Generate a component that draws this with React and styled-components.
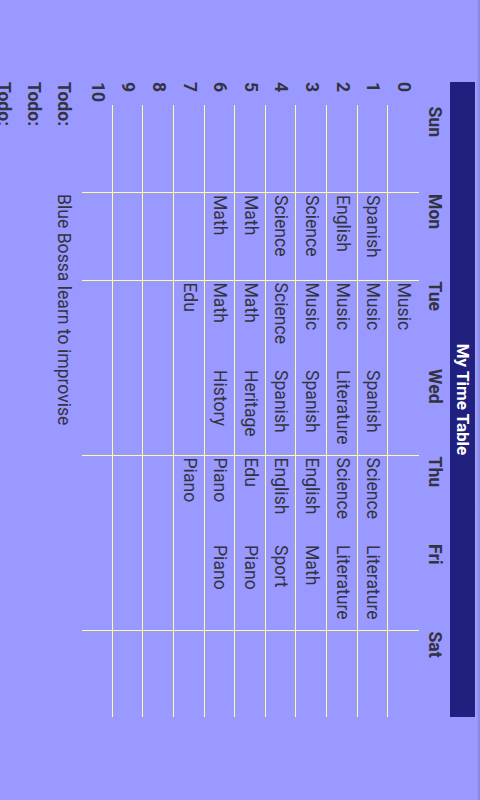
import React from 'react';
import styled, { createGlobalStyle } from 'styled-components';

const GlobalStyle = createGlobalStyle`
  html, body {
    margin: 0;
    padding: 0;
    overflow: hidden;
    background: #9999ff;
  }
`;

const Viewport = styled.div`
  position: relative;
  width: 480px;
  height: 800px;
  overflow: hidden;
  background: #9999ff;
`;

// the device is held sideways: lay out a landscape screen and turn it
const Screen = styled.div`
  width: 800px;
  height: 480px;
  transform-origin: 0 0;
  transform: translateX(480px) rotate(90deg);
  display: flex;
  flex-direction: column;
  font-family: Roboto, "Liberation Sans", sans-serif;
  color: #333340;
`;

const EdgeShade = styled.div`
  height: 5px;
  flex: none;
  background: linear-gradient(to bottom, #8484e4, #a4a4ff);
`;

const Content = styled.div`
  width: 635px;
  margin: 0 82px;
  display: flex;
  flex-direction: column;
`;

const TitleBar = styled.div`
  height: 25px;
  background: #20207f;
  color: #ffffff;
  font-weight: bold;
  font-size: 17px;
  line-height: 25px;
  text-align: center;
`;

const Row = styled.div`
  display: grid;
  grid-template-columns: 22.5px repeat(7, 87.5px);
  height: ${(p) => p.$height}px;
  line-height: ${(p) => p.$height}px;
  font-size: 17.6px;
`;

const Label = styled.div`
  font-weight: bold;
  padding-left: 0;
  white-space: nowrap;
`;

const DayHead = styled.div`
  font-weight: bold;
  padding-left: 2px;
`;

const LINE = '#ffff99';

const Cell = styled.div`
  padding-left: 3px;
  white-space: nowrap;
  box-shadow: ${(p) =>
    [p.$left && `inset 1px 0 0 ${LINE}`, p.$top && `inset 0 1px 0 ${LINE}`]
      .filter(Boolean)
      .join(', ') || 'none'};
`;

const TodoText = styled.div`
  grid-column: 3 / -1;
  padding-left: 2px;
  white-space: nowrap;
`;

const TodoList = styled.div`
  margin-top: 3px;
`;

const days = ['Sun', 'Mon', 'Tue', 'Wed', 'Thu', 'Fri', 'Sat'];
const ruled = [1, 2, 4, 6]; // columns with a line on their left edge

const lessons = [
  ['', '', 'Music', '', '', '', ''],
  ['', 'Spanish', 'Music', 'Spanish', 'Science', 'Literature', ''],
  ['', 'English', 'Music', 'Literature', 'Science', 'Literature', ''],
  ['', 'Science', 'Music', 'Spanish', 'English', 'Math', ''],
  ['', 'Science', 'Science', 'Spanish', 'English', 'Sport', ''],
  ['', 'Math', 'Math', 'Heritage', 'Edu', 'Piano', ''],
  ['', 'Math', 'Math', 'History', 'Piano', 'Piano', ''],
  ['', '', 'Edu', '', 'Piano', '', ''],
  ['', '', '', '', '', '', ''],
  ['', '', '', '', '', '', ''],
  ['', '', '', '', '', '', ''],
];

const todos = ['Blue Bossa learn to improvise', '', ''];

export default function App() {
  return (
    <Viewport>
      <GlobalStyle />
      <Screen>
        <EdgeShade />
        <Content>
          <TitleBar>My Time Table</TitleBar>
          <Row $height={31}>
            <Label />
            {days.map((d) => (
              <DayHead key={d}>{d}</DayHead>
            ))}
          </Row>
          {lessons.map((row, i) => (
            <Row key={i} $height={30.64}>
              <Label>{i}</Label>
              {row.map((subject, j) => (
                <Cell key={j} $top={i > 0} $left={ruled.includes(j)}>
                  {subject}
                </Cell>
              ))}
            </Row>
          ))}
          <TodoList>
            {todos.map((t, i) => (
              <Row key={i} $height={30}>
                <Label>Todo:</Label>
                <TodoText>{t}</TodoText>
              </Row>
            ))}
          </TodoList>
        </Content>
      </Screen>
    </Viewport>
  );
}
